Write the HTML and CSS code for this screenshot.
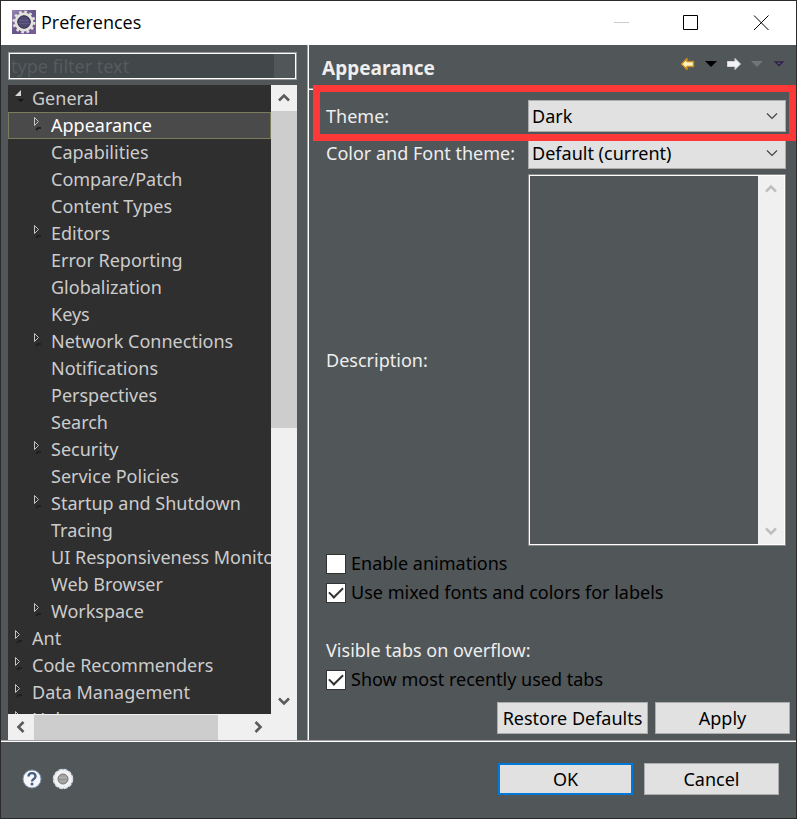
FILE: index.html
```html
<!DOCTYPE html>
<html lang="en">
<head>
<meta charset="utf-8">
<title>Preferences</title>
<link rel="stylesheet" href="styles.css">
</head>
<body>
<div class="window">
  <header class="titlebar">
    <svg class="app-icon" viewBox="0 0 24 24" aria-hidden="true">
      <defs><linearGradient id="appbg" x1="0" y1="0" x2="1" y2="1"><stop offset="0" stop-color="#9a86b4"/><stop offset=".5" stop-color="#65558a"/><stop offset="1" stop-color="#7c5c9c"/></linearGradient></defs>
      <rect width="24" height="24" fill="url(#appbg)"/>
      <circle cx="12" cy="12" r="10" fill="none" stroke="#e4e2dc" stroke-width="3" stroke-dasharray="2.6 2.636"/>
      <circle cx="12" cy="12" r="8" fill="#55498a" stroke="#e4e2dc" stroke-width="3"/>
      <circle cx="12" cy="12" r="6.2" fill="#4f4a72" stroke="#37304a" stroke-width="1"/>
      <path d="M7 10.5h10M6.5 13.5h11" stroke="#625a8c"/>
    </svg>
    <h1 class="title">Preferences</h1>
    <div class="caption-buttons">
      <button class="caption" aria-label="Minimize" disabled><svg viewBox="0 0 16 16"><path d="M1 7.500h15" stroke="#ccc" fill="none"/></svg></button>
      <button class="caption" aria-label="Maximize"><svg viewBox="0 0 16 16"><path d="M.5.5h14v14H.5z" stroke="#000" fill="none"/></svg></button>
      <button class="caption" aria-label="Close"><svg viewBox="0 0 16 16"><path d="M1 .5l14.500 14.500M15.500.5L1 15" stroke="#000" fill="none"/></svg></button>
    </div>
  </header>

  <svg class="symbols" aria-hidden="true">
    <symbol id="closed" viewBox="0 0 12 16"><path d="M1.500 2.500v8l4-4z" fill="none" stroke="#c4c4c4"/><path d="M3 15l2-2h3" fill="none" stroke="#202020" stroke-width="2"/></symbol>
    <symbol id="open" viewBox="0 0 12 16"><path d="M7 2v6H1z" fill="#d6d6d6"/><path d="M3 11h7l-3 3z" fill="#161616"/></symbol>
    <symbol id="up" viewBox="0 0 12 12"><path d="M1 8.500l5-5 5 5" fill="none" stroke="currentColor" stroke-width="2.600"/></symbol>
    <symbol id="down" viewBox="0 0 12 12"><path d="M1 3.500l5 5 5-5" fill="none" stroke="currentColor" stroke-width="2.600"/></symbol>
    <symbol id="left" viewBox="0 0 12 12"><path d="M8.500 1l-5 5 5 5" fill="none" stroke="currentColor" stroke-width="2.600"/></symbol>
    <symbol id="right" viewBox="0 0 12 12"><path d="M3.500 1l5 5-5 5" fill="none" stroke="currentColor" stroke-width="2.600"/></symbol>
    <symbol id="chevron" viewBox="0 0 12 8"><path d="M1 1.500l5 5 5-5" fill="none" stroke="#444" stroke-width="1.200"/></symbol>
  </svg>

  <div class="content">
    <nav class="sidebar">
      <input class="filter" type="text" placeholder="type filter text" aria-label="Filter">
      <div class="tree-box">
        <ul class="tree">
          <li class="item"><svg class="twisty"><use href="#open"/></svg>General</li>
          <li class="item child selected"><svg class="twisty"><use href="#closed"/></svg>Appearance</li>
          <li class="item child"><span class="twisty"></span>Capabilities</li>
          <li class="item child"><span class="twisty"></span>Compare/Patch</li>
          <li class="item child"><span class="twisty"></span>Content Types</li>
          <li class="item child"><svg class="twisty"><use href="#closed"/></svg>Editors</li>
          <li class="item child"><span class="twisty"></span>Error Reporting</li>
          <li class="item child"><span class="twisty"></span>Globalization</li>
          <li class="item child"><span class="twisty"></span>Keys</li>
          <li class="item child"><svg class="twisty"><use href="#closed"/></svg>Network Connections</li>
          <li class="item child"><span class="twisty"></span>Notifications</li>
          <li class="item child"><span class="twisty"></span>Perspectives</li>
          <li class="item child"><span class="twisty"></span>Search</li>
          <li class="item child"><svg class="twisty"><use href="#closed"/></svg>Security</li>
          <li class="item child"><span class="twisty"></span>Service Policies</li>
          <li class="item child"><svg class="twisty"><use href="#closed"/></svg>Startup and Shutdown</li>
          <li class="item child"><span class="twisty"></span>Tracing</li>
          <li class="item child"><span class="twisty"></span>UI Responsiveness Monitoring</li>
          <li class="item child"><span class="twisty"></span>Web Browser</li>
          <li class="item child"><svg class="twisty"><use href="#closed"/></svg>Workspace</li>
          <li class="item"><svg class="twisty"><use href="#closed"/></svg>Ant</li>
          <li class="item"><svg class="twisty"><use href="#closed"/></svg>Code Recommenders</li>
          <li class="item"><svg class="twisty"><use href="#closed"/></svg>Data Management</li>
          <li class="item"><svg class="twisty"><use href="#closed"/></svg>Help</li>
        </ul>
        <div class="scroll vertical">
          <button class="arrow" aria-label="Scroll up"><svg><use href="#up"/></svg></button>
          <div class="track"><div class="thumb"></div></div>
          <button class="arrow" aria-label="Scroll down"><svg><use href="#down"/></svg></button>
        </div>
        <div class="scroll horizontal">
          <button class="arrow" aria-label="Scroll left"><svg><use href="#left"/></svg></button>
          <div class="track"><div class="thumb"></div></div>
          <button class="arrow" aria-label="Scroll right"><svg><use href="#right"/></svg></button>
        </div>
      </div>
    </nav>

    <main class="page">
      <div class="page-head">
        <h2 class="page-title">Appearance</h2>
        <div class="history">
          <button class="tool" aria-label="Back"><svg viewBox="0 0 16 14"><path d="M1.500 7L7 1.500V4.500h6.500v5H7v3z" fill="#fff3bd" stroke="#c68b1c" stroke-width="1.400" stroke-linejoin="round"/></svg></button>
          <button class="tool" aria-label="Back history"><svg viewBox="0 0 16 14"><path d="M2 4h12L8 10z" fill="#000"/></svg></button>
          <button class="tool" aria-label="Forward"><svg viewBox="0 0 16 14"><path d="M14.500 7L9 1.500V4.500H1.500v5H9v3z" fill="#f2f2f2" stroke="#d4d4d4" stroke-linejoin="round"/></svg></button>
          <button class="tool" aria-label="Forward history"><svg viewBox="0 0 16 14"><path d="M2 4h12L8 10z" fill="#737577"/></svg></button>
          <button class="tool" aria-label="View menu"><svg viewBox="0 0 16 14"><path d="M3.500 5h7l-3.500 3.500z" fill="#69636f" stroke="#32204e" stroke-width="1.500"/></svg></button>
        </div>
      </div>
      <div class="page-body">
        <div class="form">
          <label for="theme">Theme:</label>
          <div class="combo"><select id="theme"><option>Dark</option></select><svg><use href="#chevron"/></svg></div>
          <label for="colors">Color and Font theme:</label>
          <div class="combo"><select id="colors"><option>Default (current)</option></select><svg><use href="#chevron"/></svg></div>
          <label for="desc">Description:</label>
          <div class="description">
            <textarea id="desc" readonly></textarea>
            <div class="scroll vertical disabled">
              <button class="arrow" aria-label="Scroll up" disabled><svg><use href="#up"/></svg></button>
              <div class="track"></div>
              <button class="arrow" aria-label="Scroll down" disabled><svg><use href="#down"/></svg></button>
            </div>
          </div>
          <div class="highlight"></div>
        </div>
        <label class="check"><input type="checkbox">Enable animations</label>
        <label class="check"><input type="checkbox" checked>Use mixed fonts and colors for labels</label>
        <p class="group">Visible tabs on overflow:</p>
        <label class="check"><input type="checkbox" checked>Show most recently used tabs</label>
        <div class="page-actions">
          <button class="button restore">Restore Defaults</button>
          <button class="button">Apply</button>
        </div>
      </div>
    </main>
  </div>

  <footer class="footer">
    <button class="round" aria-label="Help"><svg viewBox="0 0 22 22"><circle cx="11" cy="11" r="9" fill="#f5f7fa" stroke="#8196ae"/><path d="M7.500 8.500c0-4.500 7-4.500 7 0 0 2.500-3.500 2.500-3.500 5" fill="none" stroke="#465f83" stroke-width="2.400"/><circle cx="11" cy="16" r="1.500" fill="#465f83"/></svg></button>
    <button class="round" aria-label="Recorder"><svg viewBox="0 0 22 22"><circle cx="11" cy="11" r="9.500" fill="#f2f2f2" stroke="#d5dfeb" stroke-width="1.500" stroke-dasharray="4 1"/><circle cx="11" cy="11" r="5" fill="#a4a4a4" stroke="#747474"/><path d="M7.500 9.500h7" stroke="#b0b0b0"/><path d="M7 11.500h8" stroke="#949494"/></svg></button>
    <div class="dialog-actions">
      <button class="button primary">OK</button>
      <button class="button">Cancel</button>
    </div>
  </footer>
</div>
</body>
</html>
```
FILE: styles.css
```css
* { box-sizing: border-box; }

body {
  margin: 0;
  font: 18px/27px "Noto Sans", "Open Sans", sans-serif;
  color: #eee;
}

button, input, select, textarea {
  font: inherit;
  margin: 0;
  border-radius: 0;
}

button { padding: 0; border: 0; background: none; }
svg { display: block; }
.symbols { display: none; }

.window {
  display: flex;
  flex-direction: column;
  height: 100vh;
  border: 1px solid #2b2b2b;
  background: #515658;
}

.titlebar {
  display: flex;
  align-items: center;
  height: 44px;
  flex: none;
  padding-left: 11px;
  background: #fff;
  color: #000;
}

.app-icon { width: 24px; height: 24px; margin-bottom: 2px; }
.title { margin: 0 0 2px 5px; font: 400 18px/27px "Open Sans", sans-serif; }
.caption-buttons { display: flex; margin-left: auto; }
.caption { display: grid; place-items: center; width: 70px; height: 44px; }
.caption svg { width: 16px; height: 16px; }

.content { display: flex; flex: 1; min-height: 0; }

.sidebar {
  display: flex;
  flex-direction: column;
  gap: 5px;
  flex: 0 0 38.5%;
  padding: 7px 10px 0 7px;
}

.filter {
  width: 100%;
  height: 28px;
  padding: 0 1px;
  border: 2px solid #fff;
  outline: 1px solid #999;
  outline-offset: -1px;
  background: linear-gradient(to left, #515658 21px, #42474a 21px);
  color: #eee;
}
.filter::placeholder { color: #575b5d; opacity: 1; }

.tree-box {
  display: grid;
  grid-template: minmax(0, 1fr) 26px / minmax(0, 1fr) 26px;
  flex: 1;
  min-height: 0;
  background: #f0f0f0;
}

.tree {
  margin: 0;
  padding: 0;
  overflow: hidden;
  list-style: none;
  background: #2f2f2f;
  color: #ccc;
}

.item {
  display: flex;
  height: 27px;
  padding-left: 5px;
  white-space: nowrap;
  border: 1px solid transparent;
  line-height: 25px;
}
.child { padding-left: 24px; }
.selected { border-color: #7c7b5c; background: #4a4a4a; color: #fff; }
.twisty { flex: none; width: 12px; height: 16px; margin: 2px 6px 0 0; }

.scroll { display: flex; background: #f0f0f0; color: #5b5b5b; }
.vertical { flex-direction: column; width: 26px; }
.horizontal { height: 26px; }
.track { flex: 1; }
.thumb { background: #cdcdcd; }
.vertical .thumb { height: 55%; }
.horizontal .thumb { width: 87%; height: 25px; margin-top: 1px; }
.arrow { display: grid; place-items: center; flex: none; width: 26px; height: 26px; color: inherit; }
.arrow svg { width: 12px; height: 12px; }
.disabled { color: #bfbfbf; }

.page {
  display: flex;
  flex-direction: column;
  flex: 1;
  min-width: 0;
  border-left: 1px solid #a0a0a0;
  box-shadow: inset 1px 0 #fff;
  padding-left: 1px;
}

.page-head {
  display: flex;
  align-items: center;
  justify-content: space-between;
  height: 45px;
  flex: none;
  padding: 0 8px 1px 13px;
  border-bottom: 1px solid #fff;
  box-shadow: inset 0 -1px #a0a0a0;
}
.page-title { margin: 4px 0 0; font-size: 19px; font-weight: 700; }
.history { display: flex; gap: 7px; margin-bottom: 6px; }
.tool svg { width: 16px; height: 14px; }

.page-body {
  display: flex;
  flex-direction: column;
  flex: 1;
  min-height: 0;
  padding: 10px 6px 6px 17px;
}

.form {
  position: relative;
  display: grid;
  grid-template: 32px 32px minmax(0, 1fr) / max-content minmax(0, 1fr);
  gap: 5px 13px;
  align-items: center;
  flex: 1;
  min-height: 0;
  margin: 0 4px 3px 0;
}

.highlight {
  position: absolute;
  top: -15px;
  left: -13px;
  right: -10px;
  height: 56px;
  border: 7px solid #fd3838;
  pointer-events: none;
}

.combo { display: grid; align-items: center; height: 32px; }
.combo select, .combo svg { grid-area: 1 / 1; }
.combo select {
  appearance: none;
  width: 100%;
  height: 32px;
  padding: 0 28px 0 3px;
  border: 1px solid #adadad;
  background: #e1e1e1;
  color: #000;
}
.combo svg { width: 12px; height: 8px; justify-self: end; margin-right: 8px; pointer-events: none; }

.description {
  display: flex;
  align-self: stretch;
  border: 2px solid #fff;
  outline: 1px solid #888;
  outline-offset: -1px;
}
.description textarea {
  flex: 1;
  min-width: 0;
  border: 0;
  resize: none;
  background: #515658;
  color: #eee;
}

.check { display: flex; align-items: center; gap: 5px; height: 29px; color: #000; }
.check input {
  appearance: none;
  display: grid;
  place-items: center;
  width: 20px;
  height: 20px;
  border: 1px solid #333;
  background: #fff;
}
.check input:checked::before {
  content: "";
  width: 12px;
  height: 6px;
  border: solid #333;
  border-width: 0 0 2px 2px;
  transform: translateY(-2px) rotate(-45deg);
}
.group { margin: 29px 0 0; line-height: 29px; }

.page-actions { display: flex; justify-content: flex-end; gap: 7px; margin-top: 8px; }
.button {
  width: 135px;
  height: 32px;
  border: 1px solid #adadad;
  background: #e1e1e1;
  color: #000;
  white-space: nowrap;
}
.restore { width: 151px; }
.primary { border: 2px solid #0078d7; }

.footer {
  display: flex;
  align-items: center;
  gap: 9px;
  height: 78px;
  flex: none;
  padding: 1px 17px 2px 20px;
  border-top: 1px solid #a0a0a0;
  box-shadow: inset 0 1px #fff;
}
.round svg { width: 22px; height: 22px; }
.dialog-actions { display: flex; gap: 11px; margin-left: auto; }
```
